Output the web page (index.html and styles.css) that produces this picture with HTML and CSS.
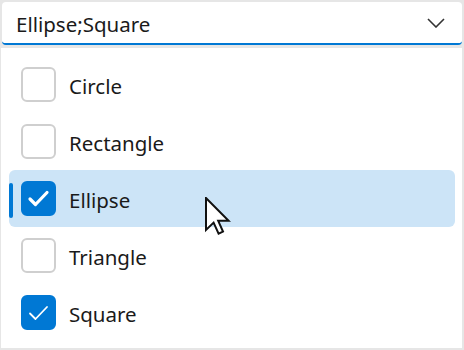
FILE: index.html
```html
<!DOCTYPE html>
<html lang="en">
<head>
    <meta charset="UTF-8">
    <title>Shapes</title>
    <link rel="stylesheet" href="styles.css">
</head>
<body>
    <div class="combo">
        <span class="combo-text">Ellipse;Square</span>
        <svg class="chevron" width="18" height="10" viewBox="0 0 18 10">
            <path d="M1 1 L9 9 L17 1" fill="none" stroke="#333" stroke-width="1.6"/>
        </svg>
    </div>
    <div class="dropdown">
        <div class="item">
            <span class="box"></span>
            <span class="label">Circle</span>
        </div>
        <div class="item">
            <span class="box"></span>
            <span class="label">Rectangle</span>
        </div>
        <div class="item hover">
            <span class="box checked">
                <svg width="35" height="35" viewBox="0 0 35 35">
                    <path d="M9 18 L14.5 23.5 L26 11.5" fill="none" stroke="#fff" stroke-width="3.2" stroke-linecap="round" stroke-linejoin="round"/>
                </svg>
            </span>
            <span class="label">Ellipse</span>
            <svg class="cursor" width="26" height="38" viewBox="0 0 13 19">
                <path d="M0.5 0.5 L0.5 16.5 L4.3 12.8 L6.8 18.3 L9 17.3 L6.6 11.9 L11.8 11.9 Z" fill="#fff" stroke="#111" stroke-width="1" stroke-linejoin="miter"/>
            </svg>
        </div>
        <div class="item">
            <span class="box"></span>
            <span class="label">Triangle</span>
        </div>
        <div class="item">
            <span class="box checked">
                <svg width="35" height="35" viewBox="0 0 35 35">
                    <path d="M9 18.5 L14.5 24 L26 12" fill="none" stroke="#fff" stroke-width="1.8" stroke-linecap="round" stroke-linejoin="round"/>
                </svg>
            </span>
            <span class="label">Square</span>
        </div>
    </div>
</body>
</html>
```

FILE: styles.css
```css
body {
    margin: 0;
    padding: 2px 2px 0 1px;
    background-color: #e6e6e6;
    font-family: "Noto Sans", "Open Sans", sans-serif;
    color: #1a1a1a;
    height: 348px;
    overflow: hidden;
}

.combo {
    display: flex;
    align-items: center;
    justify-content: space-between;
    height: 41px;
    margin-left: 1px;
    padding: 0 17px 0 14px;
    background-color: white;
    border-bottom: 2px solid #0078d4;
    border-radius: 4px;
    font-size: 20.5px;
}

.combo-text {
    margin-top: 2px;
}

.chevron {
    margin-top: 1px;
}

.dropdown {
    margin-top: 3px;
    height: 285px;
    padding: 8px 7px 7px 8px;
    background-color: white;
}

.item {
    display: flex;
    align-items: center;
    height: 57px;
    padding-left: 12px;
    border-radius: 6px;
    position: relative;
    font-size: 20.5px;
}

.label {
    margin-top: 2px;
}

.item.hover {
    background-color: #cce4f7;
}

.item.hover::before {
    content: "";
    position: absolute;
    left: 0;
    top: 13px;
    width: 4px;
    height: 35px;
    border-radius: 2px;
    background-color: #0078d4;
}

.box {
    width: 31px;
    height: 31px;
    border: 2px solid #cfcfcf;
    border-radius: 6px;
    margin-right: 13px;
    position: relative;
    flex-shrink: 0;
}

.box.checked {
    background-color: #0078d4;
    border-color: #0078d4;
}

.box svg {
    position: absolute;
    left: -2px;
    top: -2px;
}

.cursor {
    position: absolute;
    left: 196px;
    top: 27px;
}
```
